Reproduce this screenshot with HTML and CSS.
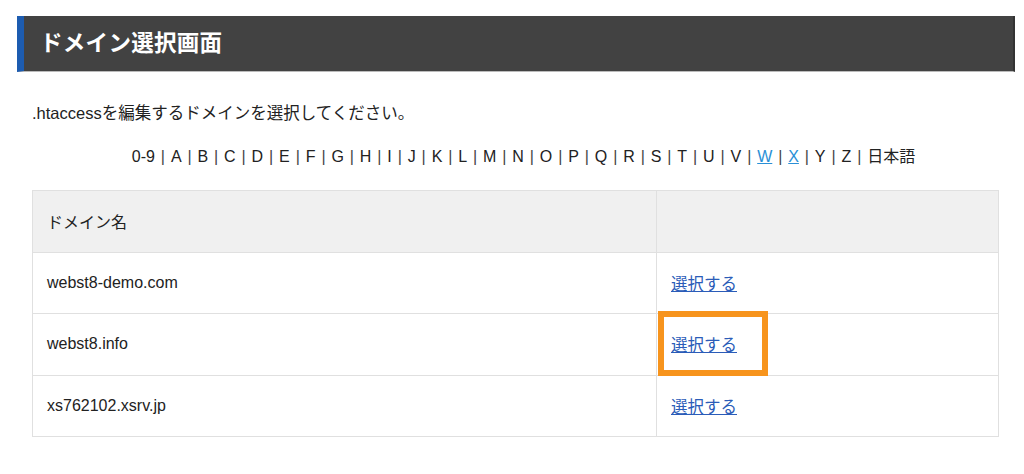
FILE: index.html
```html
<!DOCTYPE html>
<html lang="ja">
<head>
<meta charset="utf-8">
<link rel="stylesheet" href="styles.css">
</head>
<body>
<div class="page">
  <h1 class="title">ドメイン選択画面</h1>
  <div class="content">
    <p class="lead">.htaccessを編集するドメインを選択してください。</p>
    <p class="alpha">0-9<span class="sep">|</span>A<span class="sep">|</span>B<span class="sep">|</span>C<span class="sep">|</span>D<span class="sep">|</span>E<span class="sep">|</span>F<span class="sep">|</span>G<span class="sep">|</span>H<span class="sep">|</span>I<span class="sep">|</span>J<span class="sep">|</span>K<span class="sep">|</span>L<span class="sep">|</span>M<span class="sep">|</span>N<span class="sep">|</span>O<span class="sep">|</span>P<span class="sep">|</span>Q<span class="sep">|</span>R<span class="sep">|</span>S<span class="sep">|</span>T<span class="sep">|</span>U<span class="sep">|</span>V<span class="sep">|</span><a class="alink" href="#">W</a><span class="sep">|</span><a class="alink" href="#">X</a><span class="sep">|</span>Y<span class="sep">|</span>Z<span class="sep">|</span>日本語</p>
    <table class="domains">
      <thead>
        <tr><th class="c1">ドメイン名</th><th class="c2"></th></tr>
      </thead>
      <tbody>
        <tr><td class="c1">webst8-demo.com</td><td class="c2"><a class="sel" href="#">選択する</a></td></tr>
        <tr><td class="c1">webst8.info</td><td class="c2 hl"><a class="sel" href="#">選択する</a><span class="mark"></span></td></tr>
        <tr><td class="c1">xs762102.xsrv.jp</td><td class="c2"><a class="sel" href="#">選択する</a></td></tr>
      </tbody>
    </table>
  </div>
</div>
</body>
</html>
```

FILE: styles.css
```css
html, body {
  margin: 0;
  padding: 0;
  background: #fff;
}
body {
  font-family: "Liberation Sans", "Noto Sans CJK JP", sans-serif;
  color: #222;
}
.page {
  padding: 16px 9px 0 17px;
}
.title {
  margin: 0;
  height: 56px;
  box-sizing: border-box;
  background: #424242;
  border-left: 7px solid #1d5cb0;
  border-right: 2px solid #333;
  border-bottom: 1px solid #bbb;
  color: #fff;
  font-size: 22.5px;
  font-weight: bold;
  line-height: 56px;
  padding-left: 16px;
  letter-spacing: 0.3px;
}
.content {
  padding-left: 15px;
}
.lead {
  margin: 30px 0 0;
  font-size: 16.5px;
  line-height: 22px;
}
.alpha {
  margin: 22px 0 0;
  text-align: center;
  font-size: 16px;
  line-height: 22px;
}
.sep {
  margin: 0 5.9px;
  color: #444;
}
.alink {
  color: #2a8fd6;
  text-decoration: underline;
}
.domains {
  margin-top: 22px;
  width: 967px;
  border-collapse: collapse;
  border: 1px solid #e0e0e0;
  font-size: 16px;
}
.domains th, .domains td {
  border: 1px solid #e0e0e0;
  height: 60.5px;
  padding: 0 14px;
  text-align: left;
  vertical-align: middle;
  font-weight: normal;
  color: #222;
}
.domains thead th {
  background: #f0f0f0;
}
.c1 {
  width: 595px;
}
.sel {
  color: #2b5cb8;
  text-decoration: underline;
  font-size: 16.5px;
}
.hl {
  position: relative;
}
.mark {
  position: absolute;
  left: 1px;
  top: -3px;
  width: 110px;
  height: 65px;
  box-sizing: border-box;
  border: 6px solid #f7941d;
}
```
